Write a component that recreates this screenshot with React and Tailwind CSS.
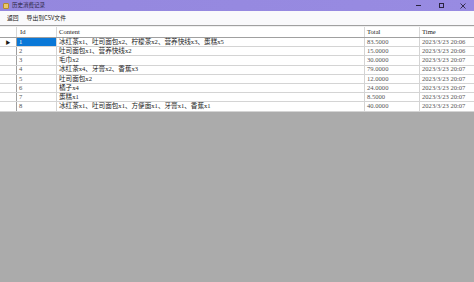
import React from 'react'

const rows = [
  { id: 1, content: '冰红茶x1、吐司面包x2、柠檬茶x2、营养快线x3、蛋糕x5', total: '83.5000', time: '2023/3/23 20:06' },
  { id: 2, content: '吐司面包x1、营养快线x2', total: '15.0000', time: '2023/3/23 20:06' },
  { id: 3, content: '毛巾x2', total: '30.0000', time: '2023/3/23 20:07' },
  { id: 4, content: '冰红茶x4、牙膏x2、香蕉x3', total: '79.0000', time: '2023/3/23 20:07' },
  { id: 5, content: '吐司面包x2', total: '12.0000', time: '2023/3/23 20:07' },
  { id: 6, content: '橘子x4', total: '24.0000', time: '2023/3/23 20:07' },
  { id: 7, content: '蛋糕x1', total: '8.5000', time: '2023/3/23 20:07' },
  { id: 8, content: '冰红茶x1、吐司面包x1、方便面x1、牙膏x1、香蕉x1', total: '40.0000', time: '2023/3/23 20:07' },
]

const font = { fontFamily: '"Liberation Serif", "Noto Sans CJK SC", serif' }

export default function App() {
  return (
    <div className="w-[474px] h-[282px] flex flex-col bg-[#ababab] overflow-hidden text-[6.6px] leading-none text-[#1a1a1a]" style={font}>
      {/* Title bar */}
      <div className="h-[11px] flex items-center bg-gradient-to-r from-[#9487de] to-[#988be2] shrink-0">
        <div className="ml-[3px] w-[6px] h-[6px] rounded-[1px] bg-[#e9c86a] border border-[#b48a2c]" />
        <span className="ml-[3px] text-[5.5px] text-[#2a2440]" style={{ fontFamily: '"Noto Sans CJK SC", sans-serif' }}>历史消费记录</span>
        <div className="ml-auto flex items-center h-full text-[#2a2440]">
          <div className="w-[24px] flex justify-center"><div className="w-[5px] h-[1px] bg-[#2a2440]" /></div>
          <div className="w-[22px] flex justify-center"><div className="w-[5px] h-[5px] border border-[#2a2440]" /></div>
          <div className="w-[22px] flex justify-center">
            <svg width="6" height="6" viewBox="0 0 6 6"><path d="M0.5 0.5L5.5 5.5M5.5 0.5L0.5 5.5" stroke="#2a2440" strokeWidth="0.9" /></svg>
          </div>
        </div>
      </div>

      {/* Menu bar */}
      <div className="h-[14px] flex items-center bg-[#f9f9fb] shrink-0 text-[5.8px]" style={{ fontFamily: '"Noto Sans CJK SC", sans-serif' }}>
        <span className="ml-[7px]">返回</span>
        <span className="ml-[8px]">导出到CSV文件</span>
      </div>
      <div className="h-[2px] bg-[#f0f0f0] border-t border-[#a0a0a0] shrink-0" />

      {/* Grid */}
      <div className="bg-white shrink-0">
        <div className="flex h-[11px] items-center border-b border-[#a0a0a0]">
          <div className="w-[17px] h-full border-r border-[#d8d8d8]" />
          <div className="w-[40px] h-full pl-[3px] flex items-center border-r border-[#d8d8d8]">Id</div>
          <div className="w-[308px] h-full pl-[2px] flex items-center border-r border-[#d8d8d8]">Content</div>
          <div className="w-[55px] h-full pl-[2px] flex items-center border-r border-[#d8d8d8]">Total</div>
          <div className="flex-1 h-full pl-[2px] flex items-center">Time</div>
        </div>
        {rows.map((r, i) => (
          <div key={r.id} className="flex h-[9.2px] border-b border-[#d4d4d4]">
            <div className="w-[17px] h-full flex items-center justify-center border-r border-[#a0a0a0] text-[5px]">
              {i === 0 ? '▶' : ''}
            </div>
            <div className={`w-[40px] h-full pl-[2px] flex items-center border-r border-[#d4d4d4] ${i === 0 ? 'bg-[#0a78d7] text-white' : 'text-[#555]'}`}>{r.id}</div>
            <div className="w-[308px] h-full pl-[2px] flex items-center border-r border-[#d4d4d4] whitespace-nowrap">{r.content}</div>
            <div className="w-[55px] h-full pl-[2px] flex items-center border-r border-[#d4d4d4] text-[#555]">{r.total}</div>
            <div className="flex-1 h-full pl-[2px] flex items-center text-[#555] whitespace-nowrap">{r.time}</div>
          </div>
        ))}
      </div>
    </div>
  )
}
